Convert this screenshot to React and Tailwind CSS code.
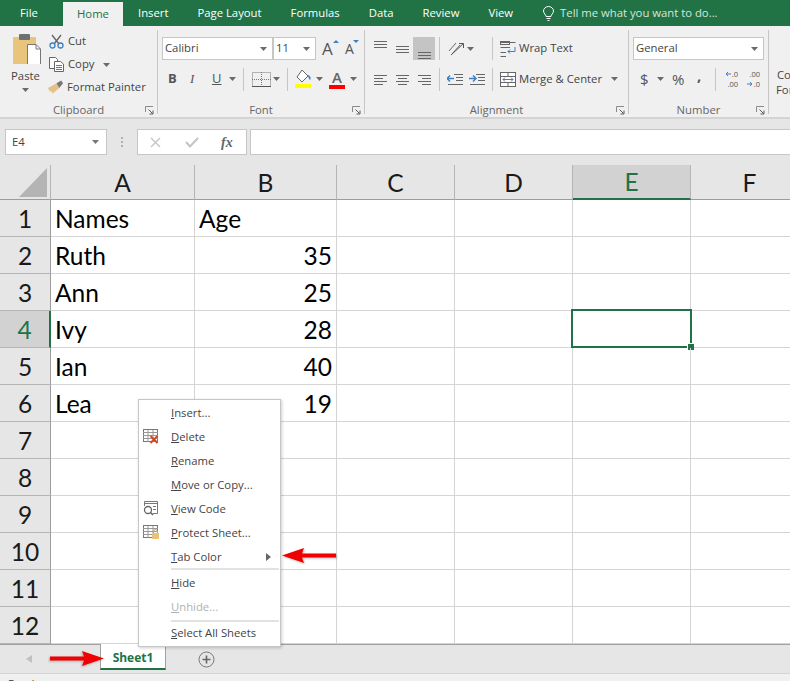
import { Fragment } from "react";

const Caret = ({ className = "" }) => (
  <svg width="7" height="4" viewBox="0 0 7 4" className={className}>
    <polygon points="0,0 7,0 3.5,4" fill="#6a6a6a" />
  </svg>
);

const Launcher = () => (
  <svg width="9" height="9" viewBox="0 0 9 9" className="mr-[3px]">
    <path d="M0.5 6V0.5H8" fill="none" stroke="#8a8a8a" />
    <path d="M3.5 3.5L7.5 7.5M4.5 8H8V4.5" fill="none" stroke="#5a5a5a" />
  </svg>
);

const Lines = ({ rows }) => (
  <svg width="15" height="12" viewBox="0 0 15 12">
    {rows.map(([x1, x2, y]) => (
      <line key={y} x1={x1} x2={x2} y1={y + 0.5} y2={y + 0.5} stroke="#666" />
    ))}
  </svg>
);

const Sep = () => <div className="w-px h-[23px] bg-[#c6c6c6]" />;

const GroupSep = () => <div className="w-px h-[84px] mt-[4px] bg-[#c6c6c6] shrink-0" />;

const GroupLabel = ({ children, launcher = true }) => (
  <div className="absolute -bottom-[1px] left-0 right-0 h-[16px] grid grid-cols-[1fr_auto_1fr] items-center text-[11.3px] leading-[16px] text-[#666]">
    <span />
    <span>{children}</span>
    <span className="justify-self-end">{launcher && <Launcher />}</span>
  </div>
);

const Combo = ({ w, text }) => (
  <div className={`${w} h-[23px] bg-white border border-[#c6c6c6] flex items-center justify-between pl-[2px] pr-[5px] text-[11.3px] text-[#444]`}>
    <span>{text}</span>
    <Caret />
  </div>
);

function Ribbon() {
  return (
    <div className="h-[93px] bg-[#f0f0f0] border-b-2 border-[#d4d4d4] flex overflow-hidden text-[#444] text-[11.3px]">
      {/* ---------------Clipboard--------------- */}
      <div className="relative w-[157px] shrink-0 flex">
        <div className="w-[49px] pl-[2px] pt-[7px] flex flex-col items-center">
          <svg width="31" height="31" viewBox="0 0 31 31">
            <rect x="3" y="4" width="23" height="27" rx="1" fill="#e9c47c" />
            <rect x="9" y="1" width="11" height="6" rx="1" fill="#707070" />
            <path d="M17.5 11.5H26L30.5 16V31.5H17.5Z" fill="#fff" stroke="#777" />
            <path d="M26 11.5V16H30.5" fill="none" stroke="#777" />
          </svg>
          <span className="leading-[16px] mt-[4px]">Paste</span>
          <Caret className="mt-[4px]" />
        </div>
        <div className="flex flex-col pt-[4px]">
          <div className="h-[23px] flex items-center gap-[4px]">
            <svg width="15" height="15" viewBox="0 0 15 15">
              <path d="M3 1L10 10M12 1L5 10" stroke="#666" strokeWidth="1.4" fill="none" />
              <circle cx="3.5" cy="11.5" r="2.5" fill="none" stroke="#3f7fc4" strokeWidth="1.3" />
              <circle cx="11.5" cy="11.5" r="2.5" fill="none" stroke="#3f7fc4" strokeWidth="1.3" />
            </svg>
            <span>Cut</span>
          </div>
          <div className="h-[23px] flex items-center gap-[4px]">
            <svg width="15" height="15" viewBox="0 0 15 15">
              <path d="M0.5 0.5H6.5L8.5 2.5V11.5H0.5Z" fill="#fff" stroke="#666" />
              <path d="M5.5 4.5H11.5L14.5 7V14.5H5.5Z" fill="#fff" stroke="#666" />
              <path d="M7 8.5H13M7 10.5H13M7 12.5H13" stroke="#3f7fc4" />
            </svg>
            <span>Copy</span>
            <Caret className="ml-[5px]" />
          </div>
          <div className="h-[23px] flex items-center gap-[3px] -ml-[1px]">
            <svg width="16" height="15" viewBox="0 0 17 15">
              <path d="M0 8L9 3L12 8L5 14L3 11L2 12Z" fill="#e3c289" />
              <path d="M9 3L14 0L16 3L12 8Z" fill="#777" />
            </svg>
            <span>Format Painter</span>
          </div>
        </div>
        <GroupLabel>Clipboard</GroupLabel>
      </div>
      <GroupSep />

      {/* ---------------Font--------------- */}
      <div className="relative w-[206px] shrink-0 pl-[4px] pt-[11px]">
        <div className="flex items-center">
          <Combo w="w-[111px]" text="Calibri" />
          <Combo w="w-[43px]" text="11" />
          <span className="ml-[6px] text-[17px] leading-[23px] text-[#555] relative w-[18px]">
            A
            <svg width="6" height="3" viewBox="0 0 6 3" className="absolute top-[3px] left-[11px]">
              <polygon points="0,3 6,3 3,0" fill="#3f7fc4" />
            </svg>
          </span>
          <span className="ml-[5px] text-[14px] leading-[23px] text-[#555] relative w-[14px]">
            A
            <svg width="6" height="3" viewBox="0 0 6 3" className="absolute top-[3px] left-[8px]">
              <polygon points="0,0 6,0 3,3" fill="#3f7fc4" />
            </svg>
          </span>
        </div>
        <div className="flex items-center h-[22px] mt-[8px] text-[#555] text-[13px]">
          <span className="ml-[6px] w-[22px] font-bold">B</span>
          <span className="w-[22px] italic font-['Liberation_Serif',serif]">I</span>
          <span className="w-[17px] underline">U</span>
          <Caret />
          <div className="ml-[7px] mr-[8px] h-[22px]"><Sep /></div>
          <svg width="19" height="15" viewBox="0 0 19 15" className="mr-[2px]">
            <rect x="0.5" y="0.5" width="18" height="14" fill="none" stroke="#777" strokeDasharray="1 1" />
            <path d="M9.5 0V15M0 7.5H19" stroke="#777" strokeDasharray="1 1" />
            <path d="M0 14.5H19" stroke="#555" />
          </svg>
          <Caret />
          <div className="ml-[7px] mr-[7px] h-[22px]"><Sep /></div>
          <svg width="17" height="20" viewBox="0 0 17 20" className="mr-[4px]">
            <path d="M7 1L13 7L7 13L2 8Z" fill="#fff" stroke="#666" />
            <path d="M13 6C16 7 16 10 15 11C14 10 13 8 13 6Z" fill="#3f7fc4" />
            <rect x="0" y="15" width="16" height="4" fill="#ffff00" />
          </svg>
          <Caret />
          <div className="ml-[6px] flex flex-col items-center w-[16px] mr-[5px] leading-none">
            <span className="text-[15px] leading-[15px] font-semibold text-[#666]">A</span>
            <span className="w-[16px] h-[4px] bg-[#ff0000]" />
          </div>
          <Caret />
        </div>
        <GroupLabel>Font</GroupLabel>
      </div>
      <GroupSep />

      {/* ---------------Alignment--------------- */}
      <div className="relative w-[263px] shrink-0 pt-[11px] pl-[4px]">
        <div className="flex items-center h-[23px]">
          <div className="w-[22px] flex justify-center -mt-[6px]"><Lines rows={[[1, 14, 1], [1, 14, 4], [1, 14, 7]]} /></div>
          <div className="w-[22px] flex justify-center"><Lines rows={[[1, 14, 3], [1, 14, 6], [1, 14, 9]]} /></div>
          <div className="w-[22px] h-[23px] bg-[#c4c4c4] flex items-end justify-center pb-[1px]"><Lines rows={[[1, 14, 5], [1, 14, 8], [1, 14, 11]]} /></div>
          <div className="ml-[4px] mr-[7px]"><Sep /></div>
          <svg width="18" height="16" viewBox="0 0 18 16" className="mr-[2px]">
            <path d="M2 10L9 2M5 13L13 4" stroke="#666" fill="none" />
            <path d="M4 14L16 3M12 2.5H16.5V7" stroke="#555" fill="none" />
          </svg>
          <Caret />
          <div className="ml-[18px] mr-[7px]"><Sep /></div>
          <svg width="16" height="16" viewBox="0 0 16 16" className="mr-[3px]">
            <path d="M0.5 1.5H15.5M0.5 6.5H10M0.5 11.5H6M0.5 15.5H6" stroke="#666" fill="none" />
            <rect x="0.5" y="0.5" width="9" height="3" fill="none" stroke="#666" />
            <path d="M15 6V10.5H8M10 8.5L8 10.5L10 12.5" stroke="#3f7fc4" fill="none" />
          </svg>
          <span>Wrap Text</span>
        </div>
        <div className="flex items-center h-[22px] mt-[8px]">
          <div className="w-[22px] flex justify-center"><Lines rows={[[1, 14, 2], [1, 10, 5], [1, 14, 8], [1, 10, 11]]} /></div>
          <div className="w-[22px] flex justify-center"><Lines rows={[[1, 14, 2], [3, 12, 5], [1, 14, 8], [3, 12, 11]]} /></div>
          <div className="w-[22px] flex justify-center"><Lines rows={[[1, 14, 2], [5, 14, 5], [1, 14, 8], [5, 14, 11]]} /></div>
          <div className="ml-[4px] mr-[7px]"><Sep /></div>
          <svg width="16" height="13" viewBox="0 0 16 13" className="mr-[6px]">
            <path d="M7 1.5H16M9 4.5H16M9 7.5H16M1 11.5H16" stroke="#666" fill="none" />
            <path d="M0 5.5H7M3 2.5L0 5.5L3 8.5" stroke="#3f7fc4" fill="none" strokeWidth="1.5" />
          </svg>
          <svg width="16" height="13" viewBox="0 0 16 13" className="mr-[7px]">
            <path d="M7 1.5H16M9 4.5H16M9 7.5H16M1 11.5H16" stroke="#666" fill="none" />
            <path d="M0 5.5H7M4 2.5L7 5.5L4 8.5" stroke="#3f7fc4" fill="none" strokeWidth="1.5" />
          </svg>
          <Sep />
          <svg width="16" height="15" viewBox="0 0 16 15" className="ml-[7px] mr-[3px]">
            <rect x="0.5" y="0.5" width="15" height="14" fill="#fff" stroke="#666" />
            <path d="M0 4.5H16M0 10.5H16M8 0V4M8 11V15" stroke="#666" />
            <path d="M3 7.5H13M5 5.5L3 7.5L5 9.5M11 5.5L13 7.5L11 9.5" stroke="#3f7fc4" fill="none" />
          </svg>
          <span>Merge &amp; Center</span>
          <Caret className="ml-[9px]" />
        </div>
        <GroupLabel>Alignment</GroupLabel>
      </div>
      <GroupSep />

      {/* ---------------Number--------------- */}
      <div className="relative w-[139px] shrink-0 pt-[11px] pl-[4px]">
        <Combo w="w-[131px]" text="General" />
        <div className="flex items-center h-[22px] mt-[8px] text-[#555]">
          <span className="ml-[7px] w-[17px] text-[15px]">$</span>
          <Caret />
          <span className="ml-[8px] w-[22px] text-[15px]">%</span>
          <span className="w-[21px] pl-[3px] -mt-[8px] text-[15px] font-bold leading-[18px]">,</span>
          <div className="mr-[7px]"><Sep /></div>
          <div className="w-[15px] flex flex-col items-end text-[7.5px] leading-[10px]">
            <div className="flex items-center gap-px">
              <svg width="6" height="6" viewBox="0 0 6 6"><path d="M6 3H1M3 1L1 3L3 5" stroke="#3f7fc4" fill="none" /></svg>
              <span>.0</span>
            </div>
            <span>.00</span>
          </div>
          <div className="w-[15px] ml-[7px] flex flex-col items-end text-[7.5px] leading-[10px]">
            <span>.00</span>
            <div className="flex items-center gap-px">
              <svg width="6" height="6" viewBox="0 0 6 6"><path d="M0 3H5M3 1L5 3L3 5" stroke="#3f7fc4" fill="none" /></svg>
              <span>.0</span>
            </div>
          </div>
        </div>
        <GroupLabel>Number</GroupLabel>
      </div>
      <GroupSep />
      <div className="pl-[7px] pt-[41px] text-[11.3px] leading-[15px] whitespace-nowrap">
        <div className="pl-[1px]">Co</div>
        <div>For</div>
      </div>
    </div>
  );
}

function FormulaBar() {
  return (
    <div className="h-[46px] bg-[#e6e6e6] flex items-center pl-[5px] pb-[2px] pt-[2px] text-[#444] text-[11.3px]">
      <div className="w-[102px] h-[26px] bg-white border border-[#c6c6c6] flex items-center justify-between pl-[6px] pr-[7px]">
        <span>E4</span>
        <svg width="7" height="4" viewBox="0 0 7 4"><polygon points="0,0 7,0 3.5,4" fill="#777" /></svg>
      </div>
      <div className="w-[30px] flex flex-col items-center gap-[2px]">
        <span className="w-[2px] h-[2px] bg-[#b0b0b0]" />
        <span className="w-[2px] h-[2px] bg-[#b0b0b0]" />
        <span className="w-[2px] h-[2px] bg-[#b0b0b0]" />
      </div>
      <div className="w-[110px] h-[26px] bg-white border border-[#c6c6c6] flex items-center">
        <svg width="11" height="11" viewBox="0 0 11 11" className="ml-[12px]">
          <path d="M1 1L10 10M10 1L1 10" stroke="#c4c4c4" strokeWidth="1.4" />
        </svg>
        <svg width="14" height="11" viewBox="0 0 14 11" className="ml-[24px]">
          <path d="M1 5L5 9.5L13 1" stroke="#c4c4c4" strokeWidth="2" fill="none" />
        </svg>
        <span className="ml-[22px] font-['Liberation_Serif',serif] italic font-bold text-[14px] text-[#666]">fx</span>
      </div>
      <div className="ml-[3px] flex-1 h-[26px] bg-white border border-[#c6c6c6] border-r-0" />
    </div>
  );
}

const rows = [
  ["Names", "Age"],
  ["Ruth", 35],
  ["Ann", 25],
  ["Ivy", 28],
  ["Ian", 40],
  ["Lea", 19],
  [],
  [],
  [],
  [],
  [],
  [],
];

const columns = ["A", "B", "C", "D", "E", "F"];

function Sheet() {
  return (
    <div className="grid grid-cols-[51px_144px_142px_118px_118px_118px_118px] font-['Lato',sans-serif] text-[24.5px] text-black">
      <div className="h-[35px] bg-[#e6e6e6] border-r border-b border-r-[#b5b5b5] border-b-[#9c9c9c] flex items-end justify-end pr-[3px] pb-[2px]">
        <svg width="28" height="29" viewBox="0 0 28 29"><polygon points="28,0 28,29 0,29" fill="#b4b4b4" /></svg>
      </div>
      {columns.map((c) => (
        <div
          key={c}
          className={`h-[35px] pt-[2px] flex items-center justify-center border-r border-r-[#b5b5b5] ${
            c === "E"
              ? "bg-[#d2d2d2] text-[#217346] border-b-2 border-b-[#217346]"
              : "bg-[#e6e6e6] text-[#1a1a1a] border-b border-b-[#9c9c9c]"
          }`}
        >
          {c}
        </div>
      ))}
      {rows.map((r, i) => (
        <Fragment key={i}>
          <div
            className={`h-[37px] pt-[2px] flex items-center justify-center border-b border-b-[#b5b5b5] ${
              i === 3
                ? "bg-[#d2d2d2] text-[#217346] border-r-2 border-r-[#217346]"
                : "bg-[#e6e6e6] text-[#1a1a1a] border-r border-r-[#9c9c9c]"
            }`}
          >
            {i + 1}
          </div>
          <div className="h-[37px] pt-[2px] border-r border-b border-[#d4d4d4] flex items-center pl-[4px]">{r[0]}</div>
          <div
            className={`h-[37px] pt-[2px] border-r border-b border-[#d4d4d4] flex items-center pl-[4px] pr-[4px] ${
              typeof r[1] === "number" ? "justify-end" : ""
            }`}
          >
            {r[1]}
          </div>
          <div className="h-[37px] border-r border-b border-[#d4d4d4]" />
          <div className="h-[37px] border-r border-b border-[#d4d4d4]" />
          <div className="h-[37px] border-r border-b border-[#d4d4d4] relative">
            {i === 3 && (
              <div className="absolute -left-[2px] -top-[2px] w-[121px] h-[39px] border-2 border-[#217346]">
                <span className="absolute -right-[4px] -bottom-[4px] w-[7px] h-[7px] bg-[#217346] border-l border-t border-white" />
              </div>
            )}
          </div>
          <div className="h-[37px] border-b border-[#d4d4d4]" />
        </Fragment>
      ))}
    </div>
  );
}

const Item = ({ first, rest, icon, arrow, disabled }) => (
  <div className={`h-[24px] flex items-center relative pl-[32px] ${disabled ? "text-[#b1b1b1]" : "text-[#444]"}`}>
    {icon && <span className="absolute left-[4px] top-[3px]">{icon}</span>}
    <span>
      <span className="underline">{first}</span>
      {rest}
    </span>
    {arrow && (
      <svg width="5" height="8" viewBox="0 0 5 8" className="absolute right-[9px] top-[8px]">
        <polygon points="0,0 5,4 0,8" fill="#666" />
      </svg>
    )}
  </div>
);

const TableIcon = ({ children }) => (
  <svg width="16" height="16" viewBox="0 0 16 16">
    <rect x="0.5" y="1.5" width="14" height="12" fill="#fff" stroke="#777" />
    <path d="M0 4.5H15M0 7.5H15M0 10.5H15M5 2V14M10 2V14" stroke="#999" />
    {children}
  </svg>
);

function ContextMenu() {
  return (
    <div className="absolute left-[138px] top-[399px] w-[143px] h-[248px] bg-white border border-[#c6c6c6] shadow-[1px_1px_3px_#0003] pt-px text-[11.3px]">
      <Item first="I" rest="nsert..." />
      <Item
        first="D"
        rest="elete"
        icon={
          <TableIcon>
            <path d="M7.5 8L14.5 15M14.5 8L7.5 15" stroke="#d2492a" strokeWidth="2" />
          </TableIcon>
        }
      />
      <Item first="R" rest="ename" />
      <Item first="M" rest="ove or Copy..." />
      <Item
        first="V"
        rest="iew Code"
        icon={
          <svg width="16" height="16" viewBox="0 0 16 16">
            <path d="M1.5 6V1.5H14.5V13.5H10M1 3.5H15M10 6.5H13M10 9.5H13" fill="none" stroke="#777" />
            <circle cx="5" cy="10" r="3.5" fill="#fff" stroke="#666" strokeWidth="1.3" />
            <path d="M7.5 12.5L10 15" stroke="#666" strokeWidth="1.6" />
          </svg>
        }
      />
      <Item
        first="P"
        rest="rotect Sheet..."
        icon={
          <TableIcon>
            <rect x="9" y="9" width="7" height="6" fill="#e8c377" />
            <path d="M10.5 9V7.5A2 2 0 0 1 14.5 7.5V9" fill="none" stroke="#c9a25a" />
          </TableIcon>
        }
      />
      <Item first="T" rest="ab Color" arrow />
      <div className="ml-[32px] mr-px h-[2px] mt-[-1px] mb-[1px] bg-[#e2e2e2]" />
      <Item first="H" rest="ide" />
      <Item first="U" rest="nhide..." disabled />
      <div className="ml-[32px] mr-px h-[2px] mt-[1px] mb-[-1px] bg-[#e2e2e2]" />
      <Item first="S" rest="elect All Sheets" />
    </div>
  );
}

const RedArrow = ({ className, flip }) => (
  <svg width="56" height="18" viewBox="0 0 56 18" className={className}>
    <g transform={flip ? "translate(56 0) scale(-1 1)" : undefined} style={{ filter: "drop-shadow(1px 1px 1px #0004)" }}>
      <polygon points="0,8.5 22,1 20,6.5 54,6.5 54,10.5 20,10.5 22,16" fill="#f00000" />
    </g>
  </svg>
);

function App() {
  const tabs = [
    { name: "Insert", left: "ml-[15px]" },
    { name: "Page Layout", left: "ml-[29px]" },
    { name: "Formulas", left: "ml-[29px]" },
    { name: "Data", left: "ml-[29px]" },
    { name: "Review", left: "ml-[29px]" },
    { name: "View", left: "ml-[29px]" },
  ];

  return (
    <div className="relative w-[790px] h-[681px] overflow-hidden font-['Open_Sans',sans-serif] bg-white">
      {/* ---------------Tabs--------------- */}
      <div className="h-[26px] pt-px bg-[#217346] flex items-center text-white text-[11.3px] whitespace-nowrap">
        <span className="ml-[20px] w-[43px]">File</span>
        <span className="w-[60px] h-[25px] mt-[1px] bg-[#f0f0f0] text-[#217346] flex items-center justify-center">Home</span>
        {tabs.map((t) => (
          <span key={t.name} className={t.left}>
            {t.name}
          </span>
        ))}
        <svg width="13" height="15" viewBox="0 0 13 15" className="ml-[29px]">
          <path d="M4 10.5C4 8.5 1.5 7.5 1.5 5A5 4.5 0 0 1 11.5 5C11.5 7.5 9 8.5 9 10.5ZM4.5 12.5H8.5M5.5 14.5H7.5" fill="none" stroke="#fff" />
        </svg>
        <span className="ml-[5px] text-[#d5e6dc]">Tell me what you want to do...</span>
      </div>

      <Ribbon />
      <FormulaBar />
      <Sheet />

      {/* ---------------Sheet Tabs--------------- */}
      <div className="h-[30px] bg-[#e6e6e6] flex border-b border-[#d4d4d4] border-t-0">
        <div className="w-[100px] border-t border-[#a0a0a0] flex items-center pl-[26px]">
          <svg width="6" height="8" viewBox="0 0 6 8"><polygon points="6,0 6,8 0,4" fill="#c0c0c0" /></svg>
        </div>
        <div className="w-[66px] h-[26px] pt-[3px] bg-white border-l border-r border-[#a0a0a0] border-b-2 border-b-[#217346] flex items-center justify-center text-[12px] font-bold text-[#217346]">
          Sheet1
        </div>
        <div className="flex-1 border-t border-[#a0a0a0] flex items-center pl-[32px]">
          <svg width="17" height="17" viewBox="0 0 17 17">
            <circle cx="8.5" cy="8.5" r="7.5" fill="none" stroke="#777" />
            <path d="M8.5 4.5V12.5M4.5 8.5H12.5" stroke="#666" strokeWidth="1.6" />
          </svg>
        </div>
      </div>
      <div className="h-[7px] bg-[#f0f0f0] pl-[8px] text-[11.3px] leading-[16px] text-[#444] pt-[2px]">Ready</div>

      <ContextMenu />
      <RedArrow className="absolute left-[282px] top-[547px]" />
      <RedArrow className="absolute left-[48px] top-[650px]" flip />
    </div>
  );
}

export default App;
